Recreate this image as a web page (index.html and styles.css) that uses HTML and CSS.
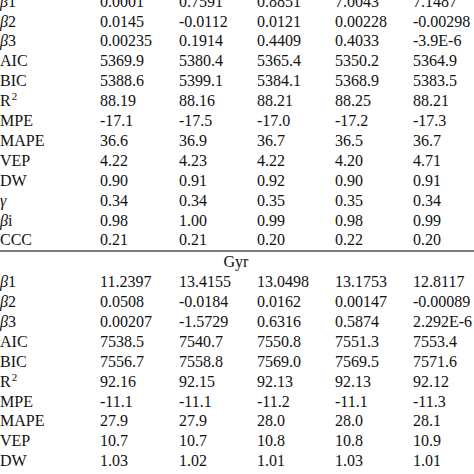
FILE: index.html
```html
<!DOCTYPE html>
<html>
<head>
<meta charset="utf-8">
<link rel="stylesheet" href="styles.css">
</head>
<body>
<div class="tbl">
  <div class="lab"><i>β</i>1</div><div>0.0001</div><div>0.7591</div><div>0.8851</div><div>7.0043</div><div>7.1487</div>
  <div class="lab"><i>β</i>2</div><div>0.0145</div><div>-0.0112</div><div>0.0121</div><div>0.00228</div><div>-0.00298</div>
  <div class="lab"><i>β</i>3</div><div>0.00235</div><div>0.1914</div><div>0.4409</div><div>0.4033</div><div>-3.9E-6</div>
  <div class="lab">AIC</div><div>5369.9</div><div>5380.4</div><div>5365.4</div><div>5350.2</div><div>5364.9</div>
  <div class="lab">BIC</div><div>5388.6</div><div>5399.1</div><div>5384.1</div><div>5368.9</div><div>5383.5</div>
  <div class="lab">R<sup>2</sup></div><div>88.19</div><div>88.16</div><div>88.21</div><div>88.25</div><div>88.21</div>
  <div class="lab">MPE</div><div>-17.1</div><div>-17.5</div><div>-17.0</div><div>-17.2</div><div>-17.3</div>
  <div class="lab">MAPE</div><div>36.6</div><div>36.9</div><div>36.7</div><div>36.5</div><div>36.7</div>
  <div class="lab">VEP</div><div>4.22</div><div>4.23</div><div>4.22</div><div>4.20</div><div>4.71</div>
  <div class="lab">DW</div><div>0.90</div><div>0.91</div><div>0.92</div><div>0.90</div><div>0.91</div>
  <div class="lab"><i>γ</i></div><div>0.34</div><div>0.34</div><div>0.35</div><div>0.35</div><div>0.34</div>
  <div class="lab"><i>β</i>i</div><div>0.98</div><div>1.00</div><div>0.99</div><div>0.98</div><div>0.99</div>
  <div class="lab">CCC</div><div>0.21</div><div>0.21</div><div>0.20</div><div>0.22</div><div>0.20</div>
  <div class="group">Gyr</div>
  <div class="lab"><i>β</i>1</div><div>11.2397</div><div>13.4155</div><div>13.0498</div><div>13.1753</div><div>12.8117</div>
  <div class="lab"><i>β</i>2</div><div>0.0508</div><div>-0.0184</div><div>0.0162</div><div>0.00147</div><div>-0.00089</div>
  <div class="lab"><i>β</i>3</div><div>0.00207</div><div>-1.5729</div><div>0.6316</div><div>0.5874</div><div>2.292E-6</div>
  <div class="lab">AIC</div><div>7538.5</div><div>7540.7</div><div>7550.8</div><div>7551.3</div><div>7553.4</div>
  <div class="lab">BIC</div><div>7556.7</div><div>7558.8</div><div>7569.0</div><div>7569.5</div><div>7571.6</div>
  <div class="lab">R<sup>2</sup></div><div>92.16</div><div>92.15</div><div>92.13</div><div>92.13</div><div>92.12</div>
  <div class="lab">MPE</div><div>-11.1</div><div>-11.1</div><div>-11.2</div><div>-11.1</div><div>-11.3</div>
  <div class="lab">MAPE</div><div>27.9</div><div>27.9</div><div>28.0</div><div>28.0</div><div>28.1</div>
  <div class="lab">VEP</div><div>10.7</div><div>10.7</div><div>10.8</div><div>10.8</div><div>10.9</div>
  <div class="lab">DW</div><div>1.03</div><div>1.02</div><div>1.01</div><div>1.03</div><div>1.01</div>
</div>
</body>
</html>
```
FILE: styles.css
```css
html, body {
  margin: 0;
  padding: 0;
  background: #ffffff;
  overflow: hidden;
}
.tbl {
  display: grid;
  grid-template-columns: 100px 79px 78px 78px 78px 61px;
  margin-top: -8.3px;
  font-family: "Liberation Serif", "Times New Roman", serif;
  font-size: 16px;
  line-height: 19.9px;
  color: #111111;
  white-space: nowrap;
}
.tbl > div {
  height: 19.9px;
}
.lab {
  padding-left: 0;
}
.lab sup {
  font-size: 11px;
  line-height: 0;
  vertical-align: 6px;
  margin-left: 1px;
}
.group {
  grid-column: 1 / -1;
  text-align: center;
  border-top: 2px solid #7a7a7a;
  padding-right: 2px;
}
```
